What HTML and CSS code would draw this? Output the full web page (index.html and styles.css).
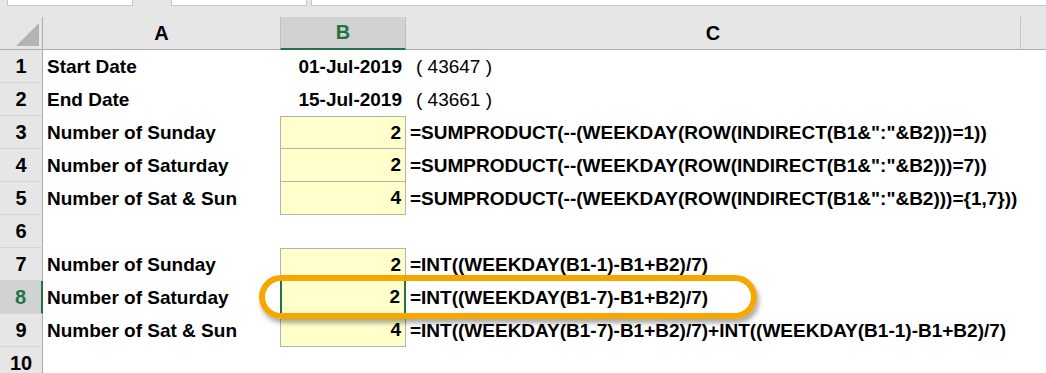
FILE: index.html
```html
<!doctype html>
<html lang="en">
<head>
  <meta charset="utf-8">
  <title>Count weekends</title>
  <link rel="stylesheet" href="styles.css">
</head>
<body>
  <div class="topbar">
    <div class="box namebox"></div>
    <div class="box fxbox"></div>
    <div class="box formulabox"></div>
  </div>

  <div class="sheet">
    <!-- header row -->
    <div class="corner"><span class="tri"></span></div>
    <div class="colhead">A</div>
    <div class="colhead active">B</div>
    <div class="colhead">C</div>
    <div class="colhead last"></div>

    <div class="rowhead">1</div>
    <div class="cell">Start Date</div>
    <div class="cell num">01-Jul-2019</div>
    <div class="cell txt">( 43647 )</div>
    <div class="cell"></div>

    <div class="rowhead">2</div>
    <div class="cell">End Date</div>
    <div class="cell num">15-Jul-2019</div>
    <div class="cell txt">( 43661 )</div>
    <div class="cell"></div>

    <div class="rowhead">3</div>
    <div class="cell">Number of Sunday</div>
    <div class="cell num yellow top">2</div>
    <div class="cell">=SUMPRODUCT(--(WEEKDAY(ROW(INDIRECT(B1&amp;":"&amp;B2)))=1))</div>
    <div class="cell"></div>

    <div class="rowhead">4</div>
    <div class="cell">Number of Saturday</div>
    <div class="cell num yellow">2</div>
    <div class="cell">=SUMPRODUCT(--(WEEKDAY(ROW(INDIRECT(B1&amp;":"&amp;B2)))=7))</div>
    <div class="cell"></div>

    <div class="rowhead">5</div>
    <div class="cell">Number of Sat &amp; Sun</div>
    <div class="cell num yellow">4</div>
    <div class="cell">=SUMPRODUCT(--(WEEKDAY(ROW(INDIRECT(B1&amp;":"&amp;B2)))={1,7}))</div>
    <div class="cell"></div>

    <div class="rowhead">6</div>
    <div class="cell"></div>
    <div class="cell"></div>
    <div class="cell"></div>
    <div class="cell"></div>

    <div class="rowhead">7</div>
    <div class="cell">Number of Sunday</div>
    <div class="cell num yellow top">2</div>
    <div class="cell">=INT((WEEKDAY(B1-1)-B1+B2)/7)</div>
    <div class="cell"></div>

    <div class="rowhead active">8</div>
    <div class="cell">Number of Saturday</div>
    <div class="cell num yellow selected">2</div>
    <div class="cell">=INT((WEEKDAY(B1-7)-B1+B2)/7)</div>
    <div class="cell"></div>

    <div class="rowhead">9</div>
    <div class="cell">Number of Sat &amp; Sun</div>
    <div class="cell num yellow">4</div>
    <div class="cell">=INT((WEEKDAY(B1-7)-B1+B2)/7)+INT((WEEKDAY(B1-1)-B1+B2)/7)</div>
    <div class="cell"></div>

    <div class="rowhead">10</div>
    <div class="cell"></div>
    <div class="cell"></div>
    <div class="cell"></div>
    <div class="cell"></div>

    <!-- callout around row 8 -->
    <div class="callout"></div>
  </div>
</body>
</html>
```

FILE: styles.css
```css
body {
  margin: 0;
  background: #ffffff;
  font-family: "Liberation Sans", Arial, sans-serif;
  overflow: hidden;
}

.topbar {
  background: #e6e6e6;
  height: 17px;
  display: flex;
  align-items: flex-start;
}

.box {
  background: #ffffff;
  height: 5px;
  border: 1px solid #c6c6c6;
  border-top: none;
}

.namebox { margin-left: 7px; width: 124px; }
.fxbox { margin-left: 38px; width: 134px; }
.formulabox { margin-left: 4px; flex: 1; border-right: none; }

.sheet {
  position: relative;
  display: grid;
  grid-template-columns: 43px 237px 126px 614px 1fr;
  grid-template-rows: 33px repeat(10, 33px);
  font-size: 19px;
  font-weight: bold;
  color: #000000;
}

.corner {
  background: #e6e6e6;
  border-right: 1px solid #ababab;
  border-bottom: 1px solid #ababab;
  position: relative;
}

.tri {
  position: absolute;
  right: 3px;
  bottom: 3px;
  width: 0;
  height: 0;
  border-left: 23px solid transparent;
  border-bottom: 23px solid #b4b4b4;
}

.colhead {
  background: #e6e6e6;
  border-bottom: 1px solid #ababab;
  display: flex;
  align-items: center;
  justify-content: center;
  font-size: 20px;
}

.colhead.active {
  background: #d2d2d2;
  color: #217346;
  border-left: 1px solid #c0c0c0;
  border-right: 1px solid #c0c0c0;
  border-bottom: 2px solid #217346;
}

.colhead.last {
  border-left: 1px solid #c6c6c6;
}

.rowhead {
  background: #e6e6e6;
  border-right: 1px solid #ababab;
  border-bottom: 1px solid #d4d4d4;
  display: flex;
  align-items: center;
  justify-content: center;
  font-size: 20px;
}

.rowhead.active {
  background: #d2d2d2;
  color: #217346;
  border-right: 2px solid #217346;
}

.cell {
  display: flex;
  align-items: center;
  padding: 0 4px;
  white-space: nowrap;
}

.cell.num {
  justify-content: flex-end;
}

.cell.txt {
  padding-left: 10px;
  font-weight: normal;
}

.yellow {
  background: #ffffcc;
  border: 1px solid #b2b2b2;
  border-top: none;
}

.yellow.top {
  border-top: 1px solid #b2b2b2;
}

.yellow.selected {
  border-left: 2px solid #217346;
  border-right: 2px solid #217346;
}

.callout {
  position: absolute;
  left: 259px;
  top: 258px;
  width: 486px;
  height: 32px;
  border: 6px solid #f7a600;
  border-radius: 22px;
  box-shadow: 2px 4px 5px rgba(0, 0, 0, 0.35);
}
```
